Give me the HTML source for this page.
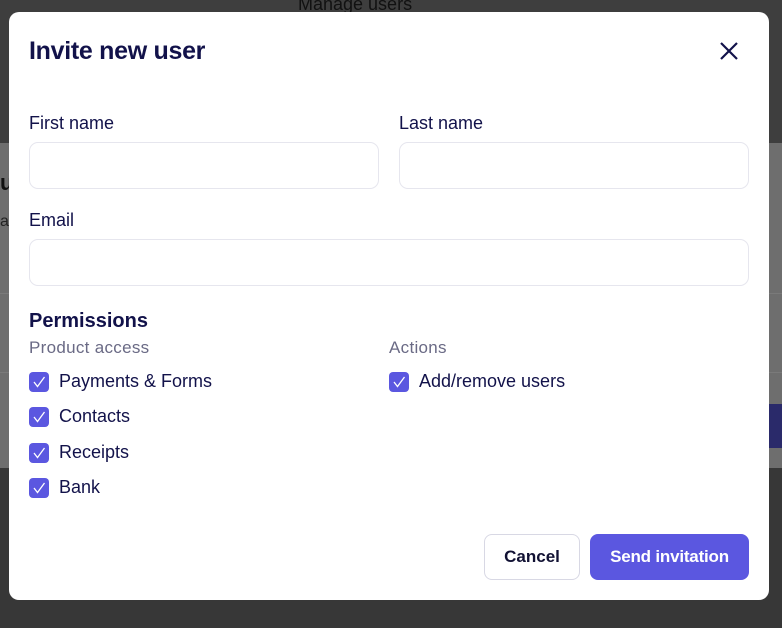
<!DOCTYPE html>
<html><head><style>
*{box-sizing:border-box;margin:0;padding:0}
body{width:782px;height:628px;background:#373737;position:relative;overflow:hidden;font-family:"Liberation Sans",sans-serif;color:#12124a}
.band{position:absolute;left:0;right:0;top:143px;height:325px;background:#6e6e6e}
.bl{position:absolute;left:0;right:0;height:1px;background:#7a7a7a}
.top{position:absolute;left:0;right:0;top:0;height:143px;background:#3e3e3e}
.modal{position:absolute;left:9px;top:12px;width:760px;height:588px;background:#fff;border-radius:10px}
.a{position:absolute;white-space:nowrap}
.inp{position:absolute;height:47px;border:1px solid #e6e6ee;border-radius:9px}
.lbl{font-size:18px}
.cb{position:absolute;width:20px;height:20px;border-radius:4px;background:#5b57e0}
.cb svg{position:absolute;left:3px;top:3px}
.ct{position:absolute;font-size:18px;white-space:nowrap}
</style></head><body>
<div class="top"></div>
<div class="band"></div>
<div class="bl" style="top:293px"></div>
<div class="bl" style="top:372px"></div>
<div class="a" style="left:298px;top:-6px;font-size:18px;color:#111">Manage users</div>
<div class="a" style="left:0;top:170px;font-size:22px;font-weight:bold;color:#111">u</div>
<div class="a" style="left:0;top:213px;font-size:16px;color:#222">a</div>
<div style="position:absolute;left:769px;top:404px;width:20px;height:44px;background:#2a2a6a"></div>
<div class="modal">
<div class="a" style="left:20px;top:25px;font-size:25px;font-weight:bold;letter-spacing:-0.3px">Invite new user</div>
<svg class="a" style="left:709px;top:28px" width="22" height="22" viewBox="0 0 22 22"><path d="M3 3L19 19M19 3L3 19" stroke="#12124a" stroke-width="2.2" fill="none"/></svg>
<div class="a lbl" style="left:20px;top:101px">First name</div>
<div class="a lbl" style="left:390px;top:101px">Last name</div>
<div class="inp" style="left:20px;top:130px;width:350px"></div>
<div class="inp" style="left:390px;top:130px;width:350px"></div>
<div class="a lbl" style="left:20px;top:198px">Email</div>
<div class="inp" style="left:20px;top:227px;width:720px"></div>
<div class="a" style="left:20px;top:298px;font-size:20px;font-weight:bold">Permissions</div>
<div class="a" style="left:20px;top:326px;font-size:17px;color:#6a6a85;letter-spacing:0.3px">Product access</div>
<div class="a" style="left:380px;top:326px;font-size:17px;color:#6a6a85;letter-spacing:0.3px">Actions</div>
<div class="cb" style="left:20px;top:360px"><svg width="14" height="14"><path d="M2 7L5.5 11.5L12.5 2" stroke="#fff" stroke-width="1.3" fill="none"/></svg></div>
<div class="ct" style="left:50px;top:359px">Payments &amp; Forms</div>
<div class="cb" style="left:20px;top:395px"><svg width="14" height="14"><path d="M2 7L5.5 11.5L12.5 2" stroke="#fff" stroke-width="1.3" fill="none"/></svg></div>
<div class="ct" style="left:50px;top:394px">Contacts</div>
<div class="cb" style="left:20px;top:431px"><svg width="14" height="14"><path d="M2 7L5.5 11.5L12.5 2" stroke="#fff" stroke-width="1.3" fill="none"/></svg></div>
<div class="ct" style="left:50px;top:430px">Receipts</div>
<div class="cb" style="left:20px;top:466px"><svg width="14" height="14"><path d="M2 7L5.5 11.5L12.5 2" stroke="#fff" stroke-width="1.3" fill="none"/></svg></div>
<div class="ct" style="left:50px;top:465px">Bank</div>
<div class="cb" style="left:380px;top:360px"><svg width="14" height="14"><path d="M2 7L5.5 11.5L12.5 2" stroke="#fff" stroke-width="1.3" fill="none"/></svg></div>
<div class="ct" style="left:410px;top:359px">Add/remove users</div>
<div class="a" style="left:475px;top:522px;width:96px;height:46px;border:1px solid #d8d8e4;border-radius:8px;font-size:17px;font-weight:bold;text-align:center;line-height:44px;color:#111133">Cancel</div>
<div class="a" style="left:581px;top:522px;width:159px;height:46px;background:#5b57e0;border-radius:8px;font-size:17px;font-weight:bold;text-align:center;line-height:46px;color:#fff;letter-spacing:-0.2px">Send invitation</div>
</div>
</body></html>
